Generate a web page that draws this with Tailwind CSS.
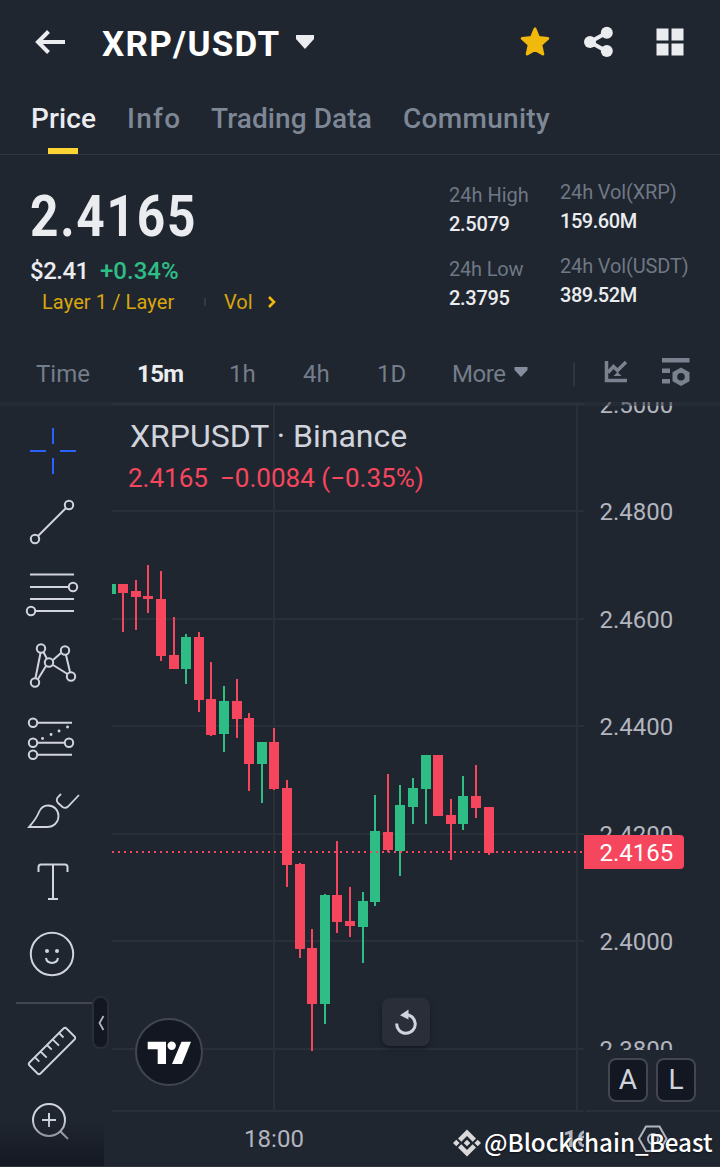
<!DOCTYPE html>
<html lang="en">
<head>
  <meta charset="UTF-8">
  <meta name="viewport" content="width=device-width, initial-scale=1.0">
  <title>XRP/USDT</title>
  <script src="https://cdn.jsdelivr.net/npm/@tailwindcss/browser@4"></script>
</head>
<body class="bg-[#202630] text-[#eaecef] font-['Roboto',sans-serif] w-[720px] h-[1167px] overflow-hidden whitespace-nowrap">
  <!-- Header -->
  <header class="h-[84px] flex items-center">
    <svg class="w-[34px] h-[34px] ml-[33px]" viewBox="0 0 34 34" fill="none" stroke="#eaecef" stroke-width="4">
      <path d="M32 17H5M15.500 6.500L5 17l10.500 10.500"/>
    </svg>
    <h1 class="ml-[35px] w-[193px] mt-[5px] text-[35px] leading-[40px] font-bold text-white tracking-[1.3px]">XRP/USDT</h1>
    <svg class="w-[20px] h-[16px]" viewBox="0 0 20 16" fill="#eaecef"><path d="M1 1h18v4l-9 10L1 5z"/></svg>
    <svg class="w-[32px] h-[32px] ml-[204px]" viewBox="0 0 32 32" fill="#f0b90b" stroke="#f0b90b" stroke-width="3" stroke-linejoin="round">
      <path d="M16 3l3.500 8.600 9.300.9-7 6.200 2 9.300L16 23.500l-7.800 4.500 2-9.300-7-6.200 9.300-.9z"/>
    </svg>
    <svg class="w-[32px] h-[32px] ml-[32px]" viewBox="0 0 32 32" fill="#eaecef">
      <path d="M7 16l17-9.500M7 16l17 9.500" stroke="#eaecef" stroke-width="4"/>
      <circle cx="7" cy="16" r="6"/><circle cx="23.800" cy="6.700" r="6"/><circle cx="23.800" cy="25" r="6"/>
    </svg>
    <svg class="w-[28px] h-[28px] ml-[41px]" viewBox="0 0 28 28" fill="#eaecef">
      <path d="M.5.5h12v12H.5zM15.500.5h12v12h-12zM.5 15.500h12v12H.5zM15.500 15.500h12v12h-12z"/>
    </svg>
  </header>

  <!-- Tabs -->
  <nav class="h-[71px] pl-[31px] flex border-b border-[#2e353f] text-[28px] leading-[70px] font-medium text-[#848e9c]/95">
    <div class="w-[96px] text-[#eaecef]">
      <div class="h-[64px] tracking-[0.1px]">Price</div>
      <div class="w-[30px] h-[6px] ml-[17px] bg-[#fcd535]"></div>
    </div>
    <div class="w-[84px] tracking-[1.3px]">Info</div>
    <div class="w-[192px] tracking-[0.1px]">Trading Data</div>
    <div class="tracking-[0.3px]">Community</div>
  </nav>

  <!-- Price summary -->
  <section class="h-[191px] flex">
    <div class="w-[449px] pl-[30px] pt-[32px]">
      <div class="text-[57px] leading-[60px] h-[58px] font-bold tracking-[2px] origin-left scale-x-[0.87]">2.4165</div>
      <div class="mt-[10px] flex text-[24px] leading-[32px] font-medium">
        <span class="w-[70px] tracking-[-0.5px]">$2.41</span>
        <span class="text-[#2ebd85]">+0.34%</span>
      </div>
      <div class="flex items-center text-[20px] leading-[30px] text-[#d9a60c] pl-[12px]">
        <span class="w-[162px] tracking-[0.1px]">Layer 1 / Layer</span>
        <span class="w-[2px] h-[8px] bg-[#333b47]"></span>
        <span class="ml-[18px] w-[43px]">Vol</span>
        <svg class="w-[10px] h-[14px]" viewBox="0 0 10 14" fill="none" stroke="#f0b90b" stroke-width="2.600"><path d="M2 2l5 5-5 5"/></svg>
      </div>
    </div>
    <div class="w-[111px] pt-[26px] text-[20px] leading-[28px]">
      <div class="text-[#848e9c]/80">24h High</div>
      <div class="font-medium mt-[1px] tracking-[-0.3px]">2.5079</div>
      <div class="text-[#848e9c]/80 mt-[17px] tracking-[-0.2px]">24h Low</div>
      <div class="font-medium mt-[1px] tracking-[-0.3px]">2.3795</div>
    </div>
    <div class="pt-[23px] text-[20px] leading-[28px]">
      <div class="text-[#848e9c]/80 tracking-[-0.15px]">24h Vol(XRP)</div>
      <div class="font-medium mt-[1px] tracking-[-0.45px]">159.60M</div>
      <div class="text-[#848e9c]/80 mt-[17px] tracking-[-0.15px]">24h Vol(USDT)</div>
      <div class="font-medium mt-[1px] tracking-[-0.45px]">389.52M</div>
    </div>
  </section>

  <!-- Intervals -->
  <nav class="h-[56px] flex items-center pl-[36px] text-[24px] text-[#848e9c]/85">
    <span class="w-[101px]">Time</span>
    <span class="w-[92px] font-bold text-[#eaecef] tracking-[-0.6px]">15m</span>
    <span class="w-[74px]">1h</span>
    <span class="w-[74px]">4h</span>
    <span class="w-[75px]">1D</span>
    <span class="w-[61px] tracking-[-0.4px]">More</span>
    <svg class="w-[16px] h-[12px] mb-[4px]" viewBox="0 0 16 12" fill="#848e9c"><path d="M1.500 1h13v3L8 11 1.500 4z"/></svg>
    <span class="ml-[44px] w-[2px] h-[24px] bg-[#2e353f]"></span>
    <svg class="w-[24px] h-[24px] ml-[29px] mb-[4px]" viewBox="0 0 24 24" fill="none" stroke="#7a828f" stroke-width="3.500">
      <path d="M2.500 1v19.500H23M4 12.500l5.500-6 4 4L22 2" /><path d="M13.500 12l4 4h-8z" fill="#7a828f" stroke="none"/>
    </svg>
    <svg class="w-[30px] h-[30px] ml-[33px] mb-[4px]" viewBox="0 0 30 30" fill="#7a828f">
      <path d="M1 1h27.500v4.500H1zM1 11.500h8V16H1zM1 22h8v4.500H1z"/>
      <path fill-rule="evenodd" d="M20 10.500l8.500 4.700v9L20 29l-8.500-4.800v-9zM20 16a3.800 3.800 0 100 7.600 3.800 3.800 0 000-7.600z"/>
    </svg>
  </nav>

  <!-- Chart -->
  <main class="relative h-[765px] flex">
    <!-- Drawing tools -->
    <aside class="w-[104px] shrink-0 pt-[13px] pl-[16px]">
      <div id="tools"></div>
    </aside>
    <svg id="chart" class="w-[616px] h-[765px]" viewBox="104 402 616 765" font-family="Roboto, sans-serif"></svg>

    <div class="absolute left-0 bottom-0 w-[104px] h-[48px] bg-linear-to-b from-[#131722]/0 to-[#131722]/95"></div>
    <div class="absolute left-0 bottom-0 w-full h-px bg-[#2e353f]"></div>
    <div class="absolute left-0 top-0 w-full h-[4px] bg-[#2b313b]/50"></div>

    <div class="absolute left-[92px] top-[594px] w-[17px] h-[53px] rounded-[8px] border-2 border-[#2a2e39] bg-[#131722] flex items-center justify-center">
      <svg class="w-[8px] h-[16px] shrink-0" viewBox="0 0 8 16" fill="none" stroke="#b2b5be" stroke-width="1.800"><path d="M6.500 1L2.500 8l4 7"/></svg>
    </div>

    <!-- TradingView badge -->
    <svg class="absolute left-[134px] top-[615px] w-[70px] h-[70px]" viewBox="134 1017 70 70">
      <circle cx="169" cy="1052" r="33" fill="#131722" stroke="#434651" stroke-width="2"/>
      <path d="M147.700 1041.700H166V1064h-8.300v-14.700h-10zM181.500 1041.700H191L182 1064h-10z" fill="#fff"/>
      <circle cx="171.700" cy="1045.800" r="4.200" fill="#fff"/>
    </svg>

    <!-- Reset view -->
    <button class="absolute left-[382px] top-[596px] w-[48px] h-[48px] rounded-[8px] bg-[#2a2e39] shadow-[0_3px_6px_rgba(0,0,0,0.35)]">
      <svg class="w-[48px] h-[48px]" viewBox="0 0 48 48" fill="none" stroke="#d1d4dc" stroke-width="3">
        <path d="M14.700 25.500a9.300 9.300 0 1 0 8-8.700"/><path d="M18 17.300l8.500-5.800v10z" fill="#d1d4dc" stroke="none"/>
      </svg>
    </button>

    <!-- Scale modes -->
    <div class="absolute left-[608px] top-[656px] flex gap-[8px] text-[28px] text-[#d1d4dc]">
      <div class="w-[40px] h-[44px] rounded-[8px] border-2 border-[#434651] bg-[#131722] flex items-center justify-center">A</div>
      <div class="w-[40px] h-[44px] rounded-[8px] border-2 border-[#434651] bg-[#131722] flex items-center justify-center">L</div>
    </div>

    <!-- Author -->
    <div class="absolute left-[452px] top-[722px] flex items-center text-white">
      <svg class="w-[30px] h-[30px] mt-[2px]" viewBox="0 0 30 30" fill="#d9d9d9">
        <path d="M15 1.500l9 9-3.300 3.300L15 8.100l-5.700 5.700L6 10.500zM15 28.500l9-9-3.300-3.300L15 21.900l-5.700-5.700L6 19.500zM4.300 11.700L7.600 15l-3.300 3.300L1 15zM25.700 11.700L29 15l-3.300 3.300-3.300-3.300zM15 11.700l3.300 3.300-3.300 3.300-3.300-3.300z"/>
      </svg>
      <span class="ml-[2px] font-['Noto_Sans_CJK_SC',sans-serif] font-medium text-[24.200px] leading-[36px] [text-shadow:0_1px_2px_rgba(0,0,0,0.6)]">@Blockchain_Beast</span>
    </div>
  </main>

  <script>
    const RED = "#f6465d";
    const GREEN = "#2ebd85";

    // one 72x72 cell per tool
    const tools = [
      `<path stroke="#2962ff" d="M14 36h16M44 36h16M37 13v16M37 43v16"/>`,
      `<path d="M22 49l28-28"/><circle cx="19" cy="52" r="4.200"/><circle cx="53" cy="18" r="4.200"/>`,
      `<path d="M14 15.500h44M14 28h39M14 40h44M19 52h39"/><circle cx="57" cy="28" r="4.200"/><circle cx="15" cy="52" r="4.200"/>`,
      `<path d="M24.500 22L19.500 47M27.500 21l3.500 7M30 35l-8 13M37 29l8-7M37 34l14.500 9M50 24l4 17"/><circle cx="25" cy="17.500" r="4.200"/><circle cx="49" cy="19.500" r="4.200"/><circle cx="33" cy="31.500" r="4.200"/><circle cx="55" cy="45.500" r="4.200"/><circle cx="19" cy="51.500" r="4.200"/>`,
      `<path d="M21 19.700h35M21 39.700h28M21 51.700h35"/><circle cx="17" cy="19.700" r="4.200"/><circle cx="17" cy="39.700" r="4.200"/><circle cx="53" cy="39.700" r="4.200"/><circle cx="17" cy="51.700" r="4.200"/><path stroke-linecap="round" stroke-width="2.800" d="M26.500 35.500h.1M35 31.500h.1M43 28h.1M51.500 24h.1"/>`,
      `<path stroke-width="1.800" d="M13 52H31C38 52 42.500 47 42.500 41S38 30.500 32 30.500C27 30.500 24.500 33.500 23 37C20.500 43.500 18.500 45.500 13 52zM45 19l-3 3q-2.500 3 0 6l4.500 4q3 2 5.500-.5L63 20"/>`,
      `<path d="M22.500 25v-5q0-2.500 2.500-2.500h24q2.500 0 2.500 2.500v5M37 17.500V52M32 52h10"/>`,
      `<circle cx="36" cy="35" r="21.200"/><path d="M30 39c1 6.500 11 6.500 12 0"/><circle cx="31" cy="32" r="2" fill="#d1d4dc" stroke="none"/><circle cx="41" cy="32" r="2" fill="#d1d4dc" stroke="none"/>`,
      `<path stroke-width="1.800" d="M47.500 13.500q1.500-1.500 3 0l8 8q1.500 1.500 0 3L24.500 58.500q-1.500 1.500-3 0l-8-8q-1.500-1.500 0-3zM19.300 42.700l4 4M25 37l5.700 5.700M31.500 30.500l4.200 4.200M37.100 24.900l5.900 5.800M43.500 18.500l4 4"/>`,
      `<circle cx="33" cy="33" r="16"/><path d="M26 33h14M33 26v14M44.500 44.500L52 52"/>`
    ];
    document.getElementById("tools").innerHTML = tools.map((t, i) =>
      (i === 8 ? `<div class="h-[2px] my-[11px] bg-[#434651]"></div>` : "") +
      `<svg class="block w-[72px] h-[72px]" viewBox="0 0 72 72" fill="none" stroke="#d1d4dc" stroke-width="2">${t}</svg>`
    ).join("");

    // [x, width, high, bodyTop, bodyBottom, low, up]
    const candles = [
      [112, 4, 584, 584, 594, 594, 1], [118, 10, 584, 584, 593, 632, 0], [131, 10, 580, 591, 597, 630, 0],
      [143, 10, 565, 596, 599, 613, 0], [156, 10, 571, 599, 656, 661, 0], [169, 10, 617, 655, 669, 669, 0],
      [181, 10, 634, 637, 669, 684, 1], [194, 10, 632, 637, 700, 712, 0], [206, 10, 662, 699, 735, 736, 0],
      [219, 10, 686, 701, 734, 752, 1], [232, 10, 679, 701, 719, 738, 0], [244, 10, 713, 718, 764, 791, 0],
      [257, 10, 742, 742, 764, 803, 1], [269, 10, 728, 742, 789, 790, 0], [282, 10, 780, 788, 865, 887, 0],
      [295, 10, 863, 864, 949, 958, 0], [307, 10, 929, 948, 1004, 1051, 0], [320, 10, 894, 895, 1004, 1024, 1],
      [332, 10, 841, 895, 922, 933, 0], [345, 10, 887, 921, 926, 937, 0], [358, 10, 892, 901, 927, 963, 1],
      [370, 10, 795, 831, 902, 906, 1], [383, 10, 774, 832, 850, 852, 0], [395, 10, 785, 805, 851, 876, 1],
      [408, 10, 778, 788, 807, 824, 1], [421, 10, 755, 755, 789, 824, 1], [433, 10, 755, 755, 816, 816, 0],
      [446, 10, 799, 815, 824, 860, 0], [458, 10, 776, 796, 824, 830, 1], [471, 10, 765, 796, 808, 818, 0],
      [484, 10, 807, 807, 853, 855, 0]
    ];
    const levels = [[404, "2.5000"], [511, "2.4800"], [619, "2.4600"], [726, "2.4400"], [834, "2.4200"], [941, "2.4000"], [1049, "2.3800"]];

    let out = `<clipPath id="scale"><rect x="584" y="402" width="136" height="648"/></clipPath>
      <clipPath id="times"><rect x="112" y="1112" width="472" height="50"/></clipPath>
      <g stroke="#2a303a" stroke-width="2"><path d="M274 402V1110M577 402V1110M112 1111H584M586 1111H720"/>`;
    levels.forEach(([y]) => out += `<path d="M112 ${y}H584"/>`);
    out += `</g><g clip-path="url(#scale)" fill="#b2b5be" font-size="24">`;
    levels.forEach(([y, label]) => out += `<text x="599.500" y="${y + 9}">${label}</text>`);
    out += `</g>`;
    candles.forEach(([x, w, high, top, bottom, low, up]) => {
      const color = up ? GREEN : RED;
      out += `<rect x="${x}" y="${top}" width="${w}" height="${bottom - top}" fill="${color}"/>`;
      if (w === 10) out += `<rect x="${x + 4}" y="${high}" width="2" height="${low - high}" fill="${color}"/>`;
    });
    out += `<path d="M112 852H584" stroke="${RED}" stroke-width="2" stroke-dasharray="2 4"/>
      <path d="M584 835h96q4 0 4 4v26q0 4-4 4h-96z" fill="${RED}"/>
      <text x="599.500" y="861" font-size="24" fill="#fff">2.4165</text>
      <text x="130" y="447" font-size="32" fill="#d1d4dc">XRPUSDT · Binance</text>
      <g font-size="26" fill="${RED}"><text x="128" y="487">2.4165</text><text x="220" y="487">−0.0084 (−0.35%)</text></g>
      <g clip-path="url(#times)" font-size="24" fill="#b2b5be"><text x="274" y="1147" text-anchor="middle">18:00</text><text x="563" y="1147" font-weight="700">16</text></g>
      <g fill="none" stroke="#b2b5be" stroke-width="2"><path d="M646 1126.500h13.500l7 12.300-7 12.200H646l-7-12.200z"/><circle cx="653" cy="1139" r="5"/></g>`;
    document.getElementById("chart").innerHTML = out;
  </script>
</body>
</html>
